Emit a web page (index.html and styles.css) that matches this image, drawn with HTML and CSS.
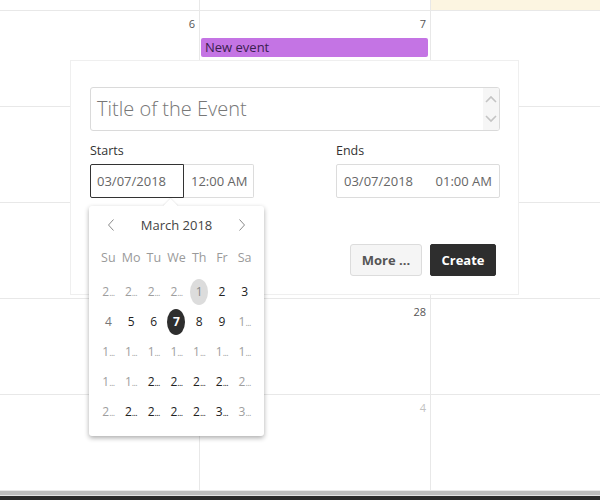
FILE: index.html
```html
<!DOCTYPE html>
<html>
<head>
<meta charset="utf-8">
<title>Calendar</title>
<link rel="stylesheet" href="styles.css">
</head>
<body>
<div class="calendar">
  <div class="strip">
    <div class="cell"></div>
    <div class="cell"></div>
    <div class="cell cream"></div>
  </div>
  <div class="week">
    <div class="cell"><span class="num">6</span></div>
    <div class="cell"><span class="num">7</span><div class="event">New event</div></div>
    <div class="cell"></div>
  </div>
  <div class="week">
    <div class="cell"></div><div class="cell"></div><div class="cell"></div>
  </div>
  <div class="week">
    <div class="cell"></div><div class="cell"></div><div class="cell"></div>
  </div>
  <div class="week">
    <div class="cell"></div>
    <div class="cell"><span class="num">28</span></div>
    <div class="cell"></div>
  </div>
  <div class="week">
    <div class="cell"></div>
    <div class="cell"><span class="num other">4</span></div>
    <div class="cell"></div>
  </div>
  <div class="footer"><div class="footer-dark"></div></div>
</div>

<div class="popup">
  <div class="title-box">
    <span class="title-ph">Title of the Event</span>
    <div class="spinner">
      <svg width="12" height="8" viewBox="0 0 12 8"><polyline points="1,7 6,2 11,7" fill="none" stroke="#c4c4c4" stroke-width="1.6"/></svg>
      <svg width="12" height="8" viewBox="0 0 12 8"><polyline points="1,1 6,6 11,1" fill="none" stroke="#c4c4c4" stroke-width="1.6"/></svg>
    </div>
  </div>
  <div class="when">
    <div class="group">
      <div class="label">Starts</div>
      <div class="inputs">
        <div class="field date focused">03/07/2018</div>
        <div class="field time">12:00 AM</div>
      </div>
    </div>
    <div class="group">
      <div class="label">Ends</div>
      <div class="inputs">
        <div class="field combo"><span>03/07/2018</span><span>01:00 AM</span></div>
      </div>
    </div>
  </div>
  <div class="actions">
    <button class="btn more">More ...</button>
    <button class="btn create">Create</button>
  </div>
</div>

<div class="datepicker">
  <div class="dp-head">
    <span class="dp-nav"><svg width="8" height="12" viewBox="0 0 8 12"><polyline points="6.5,0.5 1.5,6 6.5,11.5" fill="none" stroke="#8a8a8a" stroke-width="1"/></svg></span>
    <span class="dp-title">March 2018</span>
    <span class="dp-nav"><svg width="8" height="12" viewBox="0 0 8 12"><polyline points="1.5,0.5 6.5,6 1.5,11.5" fill="none" stroke="#8a8a8a" stroke-width="1"/></svg></span>
  </div>
  <div class="dp-row dp-wd">
    <span>Su</span><span>Mo</span><span>Tu</span><span>We</span><span>Th</span><span>Fr</span><span>Sa</span>
  </div>
  <div class="dp-days">
    <div class="dp-row">
      <span><b class="g">2<i>...</i></b></span><span><b class="g">2<i>...</i></b></span><span><b class="g">2<i>...</i></b></span><span><b class="g">2<i>...</i></b></span><span><b class="hover">1</b></span><span><b>2</b></span><span><b>3</b></span>
    </div>
    <div class="dp-row">
      <span><b class="m">4</b></span><span><b>5</b></span><span><b>6</b></span><span><b class="sel">7</b></span><span><b>8</b></span><span><b>9</b></span><span><b class="g">1<i>...</i></b></span>
    </div>
    <div class="dp-row">
      <span><b class="g">1<i>...</i></b></span><span><b class="g">1<i>...</i></b></span><span><b class="g">1<i>...</i></b></span><span><b class="g">1<i>...</i></b></span><span><b class="g">1<i>...</i></b></span><span><b class="g">1<i>...</i></b></span><span><b class="g">1<i>...</i></b></span>
    </div>
    <div class="dp-row">
      <span><b class="g">1<i>...</i></b></span><span><b class="g">1<i>...</i></b></span><span><b>2<i>...</i></b></span><span><b>2<i>...</i></b></span><span><b>2<i>...</i></b></span><span><b>2<i>...</i></b></span><span><b class="g">2<i>...</i></b></span>
    </div>
    <div class="dp-row">
      <span><b class="g">2<i>...</i></b></span><span><b>2<i>...</i></b></span><span><b>2<i>...</i></b></span><span><b>2<i>...</i></b></span><span><b>2<i>...</i></b></span><span><b>3<i>...</i></b></span><span><b class="g">3<i>...</i></b></span>
    </div>
  </div>
</div>
</body>
</html>
```

FILE: styles.css
```css
html, body {
  margin: 0;
  padding: 0;
  width: 600px;
  height: 500px;
  overflow: hidden;
  background: #fff;
  font-family: "Open Sans", "Noto Sans", sans-serif;
}

.calendar {
  width: 600px;
}

.strip,
.week {
  display: grid;
  grid-template-columns: 200px 231px 1fr;
  border-bottom: 1px solid #e8e8e8;
  box-sizing: border-box;
}

.strip {
  height: 11px;
}

.week {
  height: 96px;
}

.cell {
  border-right: 1px solid #e8e8e8;
  min-width: 0;
}

.cell:last-child {
  border-right: none;
}

.cream {
  background: #fcf5e1;
}

.num {
  display: block;
  text-align: right;
  padding: 6px 4px 0 0;
  font-size: 11px;
  line-height: 14px;
  color: #555;
}

.num.other {
  color: #c2c2c2;
}

.event {
  margin: 7px 2px 0 1px;
  height: 19px;
  line-height: 19px;
  background: #c474e4;
  border-radius: 2px;
  color: #3b2150;
  font-size: 13px;
  padding-left: 4px;
}

.footer {
  height: 9px;
  border-top: 4px solid #bdbdbd;
  box-sizing: border-box;
  padding-top: 1px;
  background: #e4e4e4;
}

.footer-dark {
  height: 5px;
  background: #2b2b2b;
}

/* popup form */
.popup {
  position: absolute;
  left: 70px;
  top: 60px;
  width: 449px;
  height: 235px;
  box-sizing: border-box;
  background: #fff;
  border: 1px solid #efefef;
  padding: 26px 18px 0 19px;
}

.title-box {
  display: flex;
  height: 44px;
  box-sizing: border-box;
  border: 1px solid #dadada;
  border-radius: 3px;
  overflow: hidden;
}

.title-ph {
  flex: 1;
  padding-left: 6px;
  font-size: 20px;
  font-weight: 300;
  line-height: 42px;
  color: #777;
}

.spinner {
  width: 16px;
  background: #f6f6f6;
  display: flex;
  flex-direction: column;
  align-items: center;
  justify-content: space-between;
  padding: 7px 0 7px;
}

.when {
  display: flex;
  justify-content: space-between;
  margin-top: 11px;
}

.label {
  font-size: 12.5px;
  line-height: 16px;
  color: #333;
  margin-bottom: 5px;
  padding-top: 1px;
}

.inputs {
  display: flex;
}

.field {
  height: 34px;
  box-sizing: border-box;
  font-size: 13px;
  line-height: 32px;
  color: #666;
  padding-left: 6px;
  border: 1px solid #dcdcdc;
}

.field.date {
  width: 94px;
  border-radius: 2px 0 0 2px;
}

.field.focused {
  border-color: #333;
}

.field.time {
  width: 70px;
  border-left: none;
  border-radius: 0 2px 2px 0;
  padding-left: 7px;
}

.field.combo {
  width: 164px;
  display: flex;
  justify-content: space-between;
  padding: 0 7px 0 7px;
  border-radius: 2px;
}

.actions {
  display: flex;
  justify-content: flex-end;
  gap: 8px;
  margin-top: 46px;
  padding-right: 4px;
}

.btn {
  height: 32px;
  box-sizing: border-box;
  font-family: "Open Sans", "Noto Sans", sans-serif;
  font-size: 13px;
  font-weight: 700;
  border-radius: 3px;
  padding: 0;
  cursor: pointer;
}

.btn.more {
  width: 72px;
  background: #f5f5f5;
  border: 1px solid #dcdcdc;
  color: #555;
}

.btn.create {
  width: 66px;
  background: #2e2e2e;
  border: 1px solid #2e2e2e;
  color: #fff;
  border-radius: 2px;
}

/* datepicker */
.datepicker {
  position: absolute;
  left: 89px;
  top: 206px;
  width: 175px;
  height: 230px;
  box-sizing: border-box;
  background: #fff;
  border-radius: 3px;
  box-shadow: 0 2px 5px rgba(0, 0, 0, 0.33);
  padding: 8px 8px 9px;
}

.datepicker::before {
  content: "";
  position: absolute;
  left: 76px;
  top: -5px;
  width: 11px;
  height: 11px;
  background: #fff;
  transform: rotate(45deg);
  box-shadow: -1px -1px 1px rgba(0, 0, 0, 0.06);
}

.dp-head {
  position: relative;
  display: flex;
  align-items: center;
  justify-content: space-between;
  height: 22px;
  padding: 0 3px;
}

.dp-nav {
  width: 22px;
  display: flex;
  justify-content: center;
}

.dp-title {
  font-size: 13px;
  color: #444;
}

.dp-row {
  display: grid;
  grid-template-columns: repeat(7, 1fr);
  height: 30px;
  align-items: center;
  text-align: center;
}

.dp-wd {
  margin-top: 6px;
  font-size: 12.5px;
  color: #9a9a9a;
}

.dp-days {
  margin-top: 5px;
}

.dp-row b {
  display: inline-block;
  min-width: 18px;
  height: 26px;
  line-height: 26px;
  border-radius: 50%;
  font-weight: 400;
  font-size: 12px;
  color: #222;
}

.dp-row b i {
  font-style: normal;
  font-size: 9px;
  letter-spacing: -0.6px;
}

.dp-row b.g {
  color: #9e9e9e;
}

.dp-row b.m {
  color: #777;
}

.dp-row b.hover {
  background: #dcdcdc;
  color: #888;
}

.dp-row b.sel {
  background: #2e2e2e;
  color: #fff;
  font-weight: 700;
}
```
